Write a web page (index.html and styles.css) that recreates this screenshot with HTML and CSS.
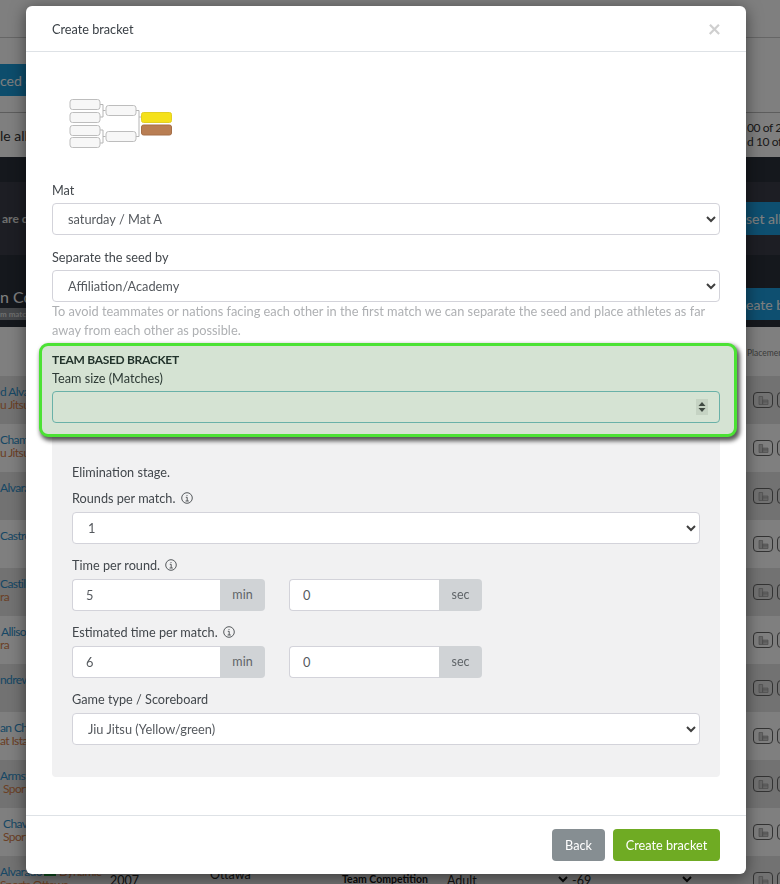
FILE: index.html
```html
<!DOCTYPE html>
<html lang="en">
<head>
<meta charset="utf-8">
<title>Create bracket</title>
<link rel="stylesheet" href="styles.css">
</head>
<body>
<div class="page">
  <div class="top-bar"></div>
  <div class="filter-bar"><span class="blue-btn left-btn">ced options</span></div>
  <div class="summary-bar"><span>le all</span><span class="counts">00 of 24<br>d 10 of</span></div>
  <div class="dark-strip"></div>
  <div class="dark-band"><b class="band-note">are displayed</b><span class="blue-btn right-btn">set all</span></div>
  <div class="dark-foot">
    <div class="comp"><span class="comp-name">n Competition</span><span class="comp-pill">m match</span></div>
    <span class="blue-btn right-btn">eate bracket</span>
  </div>
  <div class="table-head"><span>Placement</span></div>
  <div class="row alt"><div class="who"><a>d Alvarez</a><i>u Jitsu</i></div><div class="actions"><span class="act"><svg class="act-ico" viewBox="0 0 12 10"><path d="M1 .5h4v9H1zM5 4.500h6v5H5zM5 6.500h6"/></svg></span><span class="act"></span></div></div>
  <div class="row"><div class="who"><a>Chamberlain</a><i>u Jitsu</i></div><div class="actions"><span class="act"><svg class="act-ico" viewBox="0 0 12 10"><path d="M1 .5h4v9H1zM5 4.500h6v5H5zM5 6.500h6"/></svg></span><span class="act"></span></div></div>
  <div class="row alt"><div class="who"><a>Alvarado</a></div><div class="actions"><span class="act"><svg class="act-ico" viewBox="0 0 12 10"><path d="M1 .5h4v9H1zM5 4.500h6v5H5zM5 6.500h6"/></svg></span><span class="act"></span></div></div>
  <div class="row"><div class="who"><a>Castro</a></div><div class="actions"><span class="act"><svg class="act-ico" viewBox="0 0 12 10"><path d="M1 .5h4v9H1zM5 4.500h6v5H5zM5 6.500h6"/></svg></span><span class="act"></span></div></div>
  <div class="row alt"><div class="who"><a>Castillo</a><i>ra</i></div><div class="actions"><span class="act"><svg class="act-ico" viewBox="0 0 12 10"><path d="M1 .5h4v9H1zM5 4.500h6v5H5zM5 6.500h6"/></svg></span><span class="act"></span></div></div>
  <div class="row"><div class="who"><a class="in1">Allison</a><i>ra</i></div><div class="actions"><span class="act"><svg class="act-ico" viewBox="0 0 12 10"><path d="M1 .5h4v9H1zM5 4.500h6v5H5zM5 6.500h6"/></svg></span><span class="act"></span></div></div>
  <div class="row alt"><div class="who"><a>ndrews</a></div><div class="actions"><span class="act"><svg class="act-ico" viewBox="0 0 12 10"><path d="M1 .5h4v9H1zM5 4.500h6v5H5zM5 6.500h6"/></svg></span><span class="act"></span></div></div>
  <div class="row"><div class="who"><a>an Chavez</a><i>at Istanbul</i></div><div class="actions"><span class="act"><svg class="act-ico" viewBox="0 0 12 10"><path d="M1 .5h4v9H1zM5 4.500h6v5H5zM5 6.500h6"/></svg></span><span class="act"></span></div></div>
  <div class="row alt"><div class="who"><a>Armstrong</a><i class="in3">Sports</i></div><div class="actions"><span class="act"><svg class="act-ico" viewBox="0 0 12 10"><path d="M1 .5h4v9H1zM5 4.500h6v5H5zM5 6.500h6"/></svg></span><span class="act"></span></div></div>
  <div class="row"><div class="who"><a class="in3">Chavez</a><i class="in3">Sports</i></div><div class="actions"><span class="act"><svg class="act-ico" viewBox="0 0 12 10"><path d="M1 .5h4v9H1zM5 4.500h6v5H5zM5 6.500h6"/></svg></span><span class="act"></span></div></div>
  <div class="row alt last">
    <div class="who"><a>Alvarado <span class="flag"></span> <i class="inline">Dynamic</i></a><i>Sports Ottawa</i></div>
    <span class="cell">2007</span>
    <span class="cell city">Ottawa</span>
    <b class="cell team-cell">Team Competition</b>
    <span class="cell">Adult</span>
    <svg class="cell-chev" viewBox="0 0 10 7"><path d="M1 1l4 4 4-4"/></svg>
    <span class="cell">-69</span>
    <svg class="cell-chev" viewBox="0 0 10 7"><path d="M1 1l4 4 4-4"/></svg>
    <div class="actions"><span class="act"><svg class="act-ico" viewBox="0 0 12 10"><path d="M1 .5h4v9H1zM5 4.500h6v5H5zM5 6.500h6"/></svg></span><span class="act"></span></div>
  </div>
</div>

<div class="backdrop"></div>

<div class="modal">
  <header class="modal-head">
    <h1>Create bracket</h1>
    <span class="close">&times;</span>
  </header>
  <div class="modal-body">
    <svg class="bracket" viewBox="0 0 104 50" width="104" height="50">
      <g class="link">
        <path d="M31 6.500h3v12.500h-3M34 12.500h2.500"/>
        <path d="M31 32h3v13h-3M34 38.500h2.500"/>
        <path d="M67 12.500h3v26h-3M70 19h2.500"/>
      </g>
      <g class="slot">
        <rect x="1" y="1.500" width="30" height="10" rx="2.500"/>
        <rect x="1" y="14.500" width="30" height="10" rx="2.500"/>
        <rect x="1" y="27.500" width="30" height="10" rx="2.500"/>
        <rect x="1" y="39.500" width="30" height="10" rx="2.500"/>
        <rect x="37" y="7.500" width="30" height="10" rx="2.500"/>
        <rect x="37" y="33.500" width="30" height="10" rx="2.500"/>
      </g>
      <rect class="gold" x="72.500" y="14.500" width="30" height="10" rx="2"/>
      <rect class="bronze" x="72.500" y="27" width="30" height="10" rx="2"/>
    </svg>

    <label class="lbl">Mat</label>
    <div class="select-wrap">
      <select class="ctl"><option>saturday / Mat A</option></select>
      <svg class="chev" viewBox="0 0 10 7"><path d="M1 1l4 4 4-4"/></svg>
    </div>

    <label class="lbl seed-lbl">Separate the seed by</label>
    <div class="select-wrap">
      <select class="ctl"><option>Affiliation/Academy</option></select>
      <svg class="chev" viewBox="0 0 10 7"><path d="M1 1l4 4 4-4"/></svg>
    </div>
    <p class="help">To avoid teammates or nations facing each other in the first match we can separate the seed and place athletes as far away from each other as possible.</p>

    <div class="team">
      <strong class="team-title">TEAM BASED BRACKET</strong>
      <label class="lbl">Team size (Matches)</label>
      <div class="number-wrap">
        <input class="ctl team-input" type="text" value="">
        <svg class="spin" viewBox="0 0 12 16"><rect width="12" height="16"/><path d="M6 3l3.500 4h-7zM6 13l-3.500-4h7z"/></svg>
      </div>
    </div>

    <section class="stage">
      <div class="lbl stage-title">Elimination stage.</div>

      <label class="lbl">Rounds per match. <svg class="info" viewBox="0 0 12 12"><circle cx="6" cy="6" r="5.300"/><path d="M4.800 5.300H6.200V9M4.600 9H7.800M6 3v.9"/></svg></label>
      <div class="select-wrap">
        <select class="ctl inner"><option>1</option></select>
        <svg class="chev" viewBox="0 0 10 7"><path d="M1 1l4 4 4-4"/></svg>
      </div>

      <label class="lbl gap">Time per round. <svg class="info" viewBox="0 0 12 12"><circle cx="6" cy="6" r="5.300"/><path d="M4.800 5.300H6.200V9M4.600 9H7.800M6 3v.9"/></svg></label>
      <div class="pair">
        <div class="unit"><input class="ctl unit-input" type="text" value="5"><span class="addon">min</span></div>
        <div class="unit"><input class="ctl unit-input" type="text" value="0"><span class="addon sec">sec</span></div>
      </div>

      <label class="lbl gap">Estimated time per match. <svg class="info" viewBox="0 0 12 12"><circle cx="6" cy="6" r="5.300"/><path d="M4.800 5.300H6.200V9M4.600 9H7.800M6 3v.9"/></svg></label>
      <div class="pair">
        <div class="unit"><input class="ctl unit-input" type="text" value="6"><span class="addon">min</span></div>
        <div class="unit"><input class="ctl unit-input" type="text" value="0"><span class="addon sec">sec</span></div>
      </div>

      <label class="lbl gap">Game type / Scoreboard</label>
      <div class="select-wrap">
        <select class="ctl inner"><option>Jiu Jitsu (Yellow/green)</option></select>
        <svg class="chev" viewBox="0 0 10 7"><path d="M1 1l4 4 4-4"/></svg>
      </div>
    </section>
  </div>
  <footer class="modal-foot">
    <button class="btn back" type="button">Back</button>
    <button class="btn create" type="button">Create bracket</button>
  </footer>
</div>
</body>
</html>
```
FILE: styles.css
```css
* { box-sizing: border-box; }
html, body { margin: 0; height: 884px; overflow: hidden; }
body, input, select, button {
  font-family: "Lato", "Liberation Sans", sans-serif;
  font-size: 12.800px;
  color: #42474c;
}

/* page under the dialog */
.page { width: 780px; height: 884px; overflow: hidden; background: #fff; }
.top-bar { height: 38px; border-bottom: 1px solid #ccc; }
.filter-bar { height: 75px; padding-top: 26px; border-bottom: 1px solid #bbb; }
.blue-btn {
  display: flex; align-items: center; color: #fff; font-size: 14px;
  background: #1b9ad8; white-space: nowrap; overflow: hidden;
}
.left-btn { width: 200px; height: 32px; }
.right-btn { width: 60px; height: 33px; margin-left: auto; padding-left: 26px; background: #1d9fe0; }
.summary-bar {
  height: 44px; display: flex; justify-content: space-between; align-items: center;
  font-size: 14px; color: #333; overflow: hidden;
}
.counts { width: 33px; font-size: 12px; letter-spacing: -.4px; line-height: 14px; white-space: nowrap; overflow: hidden; }
.dark-strip { height: 25px; background: #2b303b; }
.dark-band {
  height: 73px; background: #3a3d48; color: #ddd; display: flex;
  align-items: center; white-space: nowrap; font-size: 12px; overflow: hidden;
}
.band-note { padding-left: 2px; }
.dark-foot {
  height: 72px; background: #2b303b; display: flex; align-items: flex-start;
  padding-top: 33px; overflow: hidden;
}
.dark-foot .right-btn { height: 32px; }
.comp { display: flex; flex-direction: column; color: #fff; white-space: nowrap; margin-top: -2px; }
.comp-name { font-size: 16px; line-height: 22px; }
.comp-pill { background: #8b8f94; color: #ddd; font-size: 8px; font-weight: 700; line-height: 12px; width: 60px; }
.table-head {
  height: 49px; background: #fff; display: flex; justify-content: flex-end;
  align-items: center; padding-top: 2px; font-size: 8.500px; color: #777; white-space: nowrap;
}
.table-head span { width: 33px; overflow: hidden; }
.row {
  height: 48px; overflow: hidden; display: grid; align-items: start;
  grid-template-columns: 110px 100px 132px 105px 111px 14px 110px 71px 40px;
  background: #fff;
}
.row.alt { background: #e4e4e4; }
.who { padding-top: 9px; white-space: nowrap; font-size: 12px; letter-spacing: -.6px; line-height: 13px; overflow: hidden; }
.who a { display: block; color: #2f8fca; }
.who i { display: block; font-style: normal; color: #d6804a; }
.who i.inline { display: inline; }
.in1 { padding-left: 1px; }
.in3 { padding-left: 3px; }
.actions { grid-column: 9; display: flex; gap: 4px; margin-top: 16px; }
.act {
  width: 20px; height: 16px; flex: none; border: 1px solid #666; border-radius: 4px;
  display: flex; align-items: center; justify-content: center;
}
.act-ico { width: 11px; height: 9px; }
.act-ico path { fill: #ccc; stroke: #999; stroke-width: .8; }
.last .who { grid-column: 1; }
.flag { display: inline-block; width: 12px; height: 8px; background: #1a9a3a; }
.cell { padding-top: 17px; font-size: 12.500px; color: #222; white-space: nowrap; }
.city { padding-top: 11px; }
.team-cell { font-size: 10.500px; color: #111; }
.cell-chev { width: 10px; height: 7px; margin-top: 20px; }
.cell-chev path { fill: none; stroke: #111; stroke-width: 2; }

.backdrop { position: fixed; inset: 0; background: rgba(0, 0, 0, .5); }

/* dialog */
.modal {
  position: absolute; left: 26px; top: 6px; width: 720px; height: 868px;
  background: #fff; border-radius: 6px; box-shadow: 0 3px 16px rgba(0, 0, 0, .5);
  display: flex; flex-direction: column;
}
.modal-head {
  height: 46px; flex: none; padding: 0 26px 0 26px; border-bottom: 1px solid #dee2e6;
  display: flex; align-items: center; justify-content: space-between;
}
.modal-head h1 { margin: 0; font-size: 12.700px; font-weight: 400; color: #3a4046; }
.close { font-size: 23px; font-weight: 700; color: #cfcfcf; line-height: 1; margin-right: -1px; }
.modal-body { flex: 1; padding: 0 26px; }
.bracket { display: block; margin: 46px 0 33px 17px; }
.link path { fill: none; stroke: #b5b5b5; stroke-width: 1; }
.slot rect { fill: #f7f7f7; stroke: #bdbdbd; stroke-width: 1; }
.gold { fill: #f5e11a; stroke: #e3cf22; stroke-width: 1; }
.bronze { fill: #b97e53; stroke: #a56f48; stroke-width: 1; }

.lbl { display: block; height: 18px; line-height: 18px; margin-bottom: 4px; font-size: 12.700px; white-space: nowrap; }
.seed-lbl { margin-top: 13px; }
.select-wrap { position: relative; }
.ctl {
  display: block; width: 100%; height: 32px; background: #fff; color: #55595e;
  border: 1px solid #d3d3da; border-radius: 4px; padding: 0 15px; font-size: 12.800px;
  appearance: none; outline: none;
}
.chev { position: absolute; right: 4px; top: 13px; width: 10px; height: 7px; pointer-events: none; }
.chev path { fill: none; stroke: #3f3f3f; stroke-width: 2; }
.help { margin: 0 0 .5px; font-size: 12.800px; line-height: 19px; color: #aeb0b3; }

.team {
  margin: 2.500px -17px 0 -13px; padding: 5px 14px 11px 10px; height: 94px;
  background: #d5e3d3; border: 3px solid #4be234; border-radius: 9px;
  box-shadow: 2px 3px 4px 1px rgba(0, 0, 0, .65);
  position: relative;
}
.team-title { display: block; height: 18px; line-height: 18px; font-size: 12px; letter-spacing: -.3px; font-weight: 700; color: #22332b; }
.team .lbl { color: #2d3a35; }
.number-wrap { position: relative; }
.team-input { background: #d5e3d3; border-color: #69b1a8; }
.spin { position: absolute; right: 12px; top: 8px; width: 12px; height: 16px; }
.spin rect { fill: #c5d3c3; }
.spin path { fill: #3f4a42; }

.stage {
  height: 340px; padding: 26px 20px 0; background: #f1f1f2;
  border-radius: 0 0 4px 4px;
}
.stage .lbl { margin-bottom: 5px; }
.stage .stage-title { margin-bottom: 8px; }
.stage .gap { margin-top: 12px; }
.inner { padding: 0 15px; }
.info { width: 12px; height: 12px; vertical-align: -1px; margin-left: 2px; }
.info circle, .info path { fill: none; stroke: #45494d; stroke-width: .9; }
.pair { display: flex; gap: 24px; }
.unit { display: flex; width: 193px; }
.unit-input { flex: 1; width: 148px; border-radius: 4px 0 0 4px; border-right: 0; padding: 0 13px; }
.addon {
  width: 45px; flex: none; height: 32px; background: #d0d3d6; color: #5f6468;
  border-radius: 0 4px 4px 0; display: flex; align-items: center; justify-content: center;
  font-size: 12.500px;
}
.addon.sec { width: 43px; }

.modal-foot {
  height: 59px; flex: none; border-top: 1px solid #dee2e6; padding: 13px 26px 13px;
  display: flex; justify-content: flex-end; gap: 8px;
}
.btn {
  height: 32px; border: 0; border-radius: 4px; color: #fff; font-size: 12.700px; padding: 0;
}
.back { width: 53px; background: #868e92; }
.create { width: 107px; background: #6fab23; }
```
